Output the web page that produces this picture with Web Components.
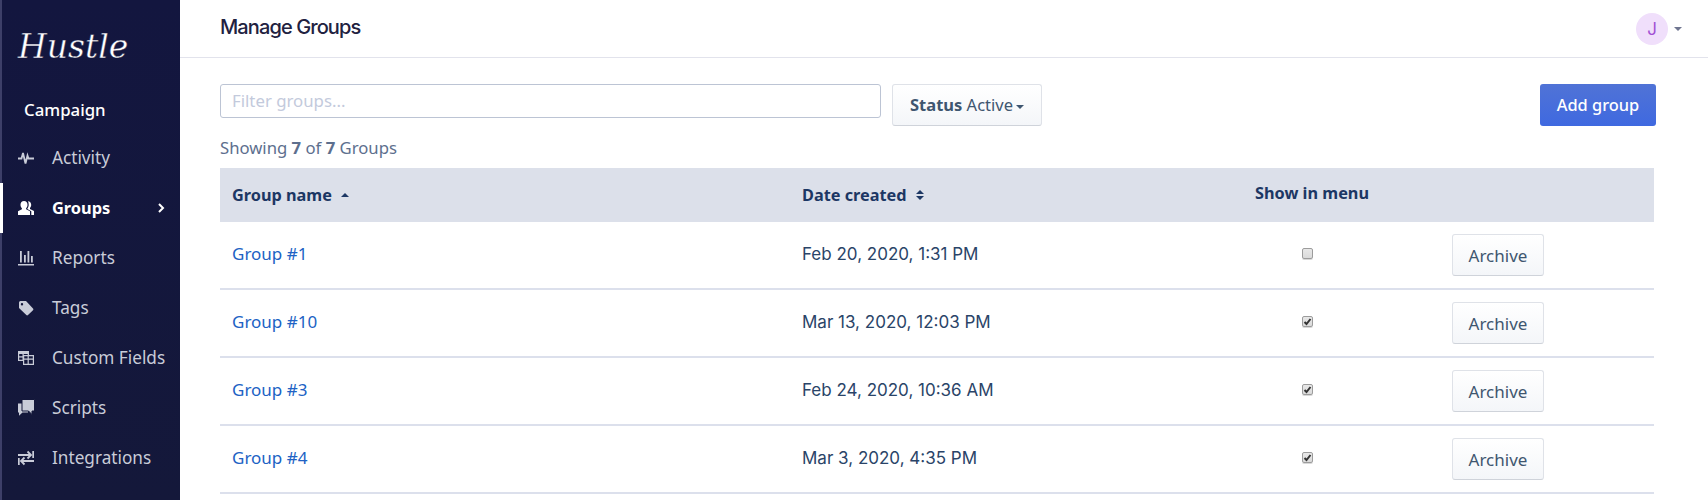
<!DOCTYPE html>
<html><head><meta charset="utf-8"><title>Manage Groups</title>
<style>
html,body{margin:0;padding:0;height:500px;overflow:hidden;background:#fff}
body{font-family:"Noto Sans","Liberation Sans",sans-serif}
app-shell{height:500px}
</style></head><body>
<template id="t-shell"><style>
:host{display:flex;width:1708px;overflow:hidden}
.main{flex:1;min-width:0;display:flex;flex-direction:column}
.content{padding:26px 52px 0 40px;display:flex;flex-direction:column}
</style><slot name="side"></slot><div class="main"><slot name="top"></slot><div class="content"><slot></slot></div></div></template>

<template id="t-side"><style>
:host{display:flex;flex-direction:column;width:180px;height:500px;flex:none;box-sizing:border-box;border-left:2px solid #3d3f68;background:linear-gradient(#13163f,#14183a)}
.logo{font:italic 400 33px/40px "DejaVu Serif",serif;color:#fff;padding:27px 0 0 16px;height:43px;-webkit-text-stroke:.4px #13163f}
.camp{font:500 16.8px/20px "Noto Sans",sans-serif;color:#fff;padding:30px 0 0 22px;height:33px}
</style><div class="logo">Hustle</div><div class="camp">Campaign</div><slot></slot></template>

<template id="t-nav"><style>
:host{display:flex;align-items:center;height:50px;margin-left:-2px;padding-left:18px;color:#c9ccd8;font:400 17.2px/20px "Noto Sans",sans-serif;box-sizing:border-box;width:180px}
:host([active]){color:#fff;font-weight:700;font-size:16.4px;background:linear-gradient(#fff,#fff) left/3px 100% no-repeat}
.i{width:16px;height:16px;margin-right:18px;flex:none;display:flex}
.t{flex:1;white-space:nowrap}
.c{width:8px;height:12px;margin-right:15px;fill:none;stroke:#fff;stroke-width:2}
</style><span class="i"><slot name="icon"></slot></span><span class="t"><slot></slot></span><svg class="c" viewBox="0 0 8 12" id="c"><path d="M2 2l4 4-4 4"/></svg></template>

<template id="t-top"><style>
:host{display:flex;align-items:center;height:57px;border-bottom:1px solid #e2e3ec;padding:0 26px 0 40px;background:#fff}
h1{flex:1;margin:0;font:500 20px/24px "Inter",sans-serif;color:#21213f;letter-spacing:-.9px;padding-bottom:3px}
.av{width:32px;height:32px;border-radius:50%;background:#f0dffb;color:#a24fd4;display:flex;align-items:center;justify-content:center;font:400 17px/20px "Inter",sans-serif}
.car{width:0;height:0;border:4px solid transparent;border-top-color:#6f7590;border-bottom:0;margin-left:6px}
</style><h1><slot></slot></h1><div class="av">J</div><div class="car"></div></template>

<template id="t-filter"><style>
:host{display:flex;align-items:flex-start;height:42px}
.input{box-sizing:border-box;width:661px;height:34px;border:1px solid #bcc4d4;border-radius:3px;padding:0 11px;font:400 16.8px/32px "Noto Sans",sans-serif;color:#c3cadc;background:#fff}
.sp{flex:1}
.status{margin-left:11px;width:150px;font-size:16.5px}
.status i{display:inline-block;width:0;height:0;border:4px solid transparent;border-top-color:#3f5670;border-bottom:0;margin-left:3px;vertical-align:middle}
.add{box-sizing:border-box;width:116px;height:42px;border-radius:3px;background:linear-gradient(#5073d6,#3f69e0);color:#fff;font:500 16.4px/41px "Noto Sans",sans-serif;text-align:center}
</style><div class="input">Filter groups...</div><gh-btn class="status"><b>Status</b> Active<i></i></gh-btn><span class="sp"></span><div class="add">Add group</div></template>

<template id="t-btn"><style>
:host{display:inline-flex;align-items:center;justify-content:center;box-sizing:border-box;height:42px;border:1px solid #dfe2e8;border-bottom-color:#cfd3da;border-radius:3px;background:linear-gradient(#fff,#f4f6f9);color:#3f5670;font:400 17px/20px "Noto Sans",sans-serif;white-space:pre}
</style><span><slot></slot></span></template>

<template id="t-count"><style>
:host{display:block;height:42px;font:400 16.7px/20px "Noto Sans",sans-serif;color:#5d6f8e;box-sizing:border-box;padding-top:12px}
</style><slot></slot></template>

<template id="t-table"><style>
:host{display:block;width:1434px}
.h{display:grid;grid-template-columns:570px 450px 1fr;height:54px;background:#dce0ea;color:#1c3764;font:700 16.3px/20px "Noto Sans",sans-serif}
.h>div{display:flex;align-items:center;padding-left:12px}
.h>div:nth-child(3){padding-left:15px;padding-bottom:5px}
svg{margin-left:9px;fill:#1c3764}
</style><div class="h"><div>Group name<svg width="8" height="12" viewBox="0 0 8 12"><path d="M0 8l4-4 4 4z"/></svg></div><div>Date created<svg width="8" height="12" viewBox="0 0 8 12"><path d="M0 5l4-4 4 4zM0 7l4 4 4-4z"/></svg></div><div>Show in menu</div></div><slot></slot></template>

<template id="t-row"><style>
:host{display:grid;grid-template-columns:570px 450px 200px 1fr;height:68px;box-sizing:border-box;border-bottom:2px solid #dce0ec;align-items:center}
.n{padding:0 0 3px 12px;color:#2062c4;font:400 17px/20px "Noto Sans",sans-serif}
.d{padding:0 0 3px 12px;color:#2a4468;font:400 17px/20px "Inter",sans-serif}
.c{display:flex;justify-content:center;margin-left:-66px}
.b{padding-left:12px}
.box{width:11px;height:11px;box-sizing:border-box;border:1px solid #9c9c9c;border-radius:2px;background:linear-gradient(#e8e8e8,#dadada);display:flex;margin-top:-3px;box-shadow:0 1px 0 #d8d8d8}
.box svg{display:none;width:9px;height:9px}
:host([on]) .box svg{display:block}
gh-btn{width:92px;padding-top:2px}
</style><div class="n"><slot name="name"></slot></div><div class="d"><slot name="date"></slot></div><div class="c"><span class="box"><svg viewBox="0 0 9 9"><path d="M1.500 5l2 2 4-5" fill="none" stroke="#333" stroke-width="2"/></svg></span></div><div class="b"><gh-btn>Archive</gh-btn></div></template>

<app-shell>
<side-bar slot="side">
<nav-item><svg slot="icon" viewBox="0 0 16 16" width="16" height="16" fill="none" stroke="currentColor" stroke-width="1.800"><path d="M0 8.500h3.500l1.500-5.500 2.500 10.500 2-8 1 3h5.500"/></svg>Activity</nav-item>
<nav-item active><svg slot="icon" viewBox="0 0 16 16" width="16" height="16" fill="currentColor" style="overflow:visible"><path d="M6 1c2.200 0 3.500 1.600 3.500 3.800 0 1.400-.5 2.700-1.400 3.500v1l3.900 2V15H0v-3.700l3.900-2v-1C3 7.500 2.500 6.200 2.500 4.800 2.500 2.600 3.800 1 6 1z"/><path d="M10 1.200c1.900.2 3.200 1.600 3.200 3.600 0 1.200-.5 2.500-1.200 3.300v.9l4 2V15h-2.700v-3.800l-3.900-2.100v-.6c.8-1 1.300-2.300 1.300-3.700 0-1.500-.3-2.600-.7-3.600z"/></svg>Groups</nav-item>
<nav-item><svg slot="icon" viewBox="0 0 16 16" width="16" height="16" fill="currentColor"><path d="M0 14h16v1.500H0zM2 1h1.800v11.500H2zM6 5h1.800v7.500H6zM9.500 1h1.800v11.500H9.500zM13 6h1.800v6.500H13z"/></svg>Reports</nav-item>
<nav-item><svg slot="icon" viewBox="0 0 16 16" width="16" height="16" fill="currentColor"><path fill-rule="evenodd" d="M1 2.500A1.500 1.500 0 0 1 2.500 1H8l7 7.500c.5.500.5 1.200 0 1.700L10 15c-.5.500-1.200.500-1.700 0L1 8zM4 3a1.200 1.200 0 1 0 0 2.400A1.200 1.200 0 0 0 4 3z"/></svg>Tags</nav-item>
<nav-item><svg slot="icon" viewBox="0 0 16 16" width="16" height="16" fill="currentColor"><path fill-rule="evenodd" d="M0 1h11v4h5v10H5v-4H0zM1.200 4v2.300h3.300V4zM5.700 4v1h4V4zM1.200 7.500v2.300h3.300V7.500zM6.200 6.300v2.300h3.400V6.300zM10.800 6.300v2.300h4V6.300zM6.200 9.800v4h3.400v-4zM10.800 9.800v4h4v-4z"/></svg>Custom Fields</nav-item>
<nav-item><svg slot="icon" viewBox="0 0 16 16" width="16" height="16" fill="currentColor" style="overflow:visible"><path d="M0 3.500h10v9H4.500L1 15.800v-3.300H0z"/><path d="M4 -.5h12.500v11.500h-2.500v3.500l-3.500-3.500H4z" stroke="#14183a" stroke-width="1"/></svg>Scripts</nav-item>
<nav-item><svg slot="icon" viewBox="0 0 16 16" width="16" height="16" fill="none" stroke="currentColor" stroke-width="1.800"><path d="M0 5h13M9.500 1.500L13 5 9.500 8.500M15.200 1v7M16 11H3M6.500 7.500L3 11l3.500 3.500M.8 8v7"/></svg>Integrations</nav-item>
</side-bar>
<top-bar slot="top">Manage Groups</top-bar>
<filter-bar></filter-bar>
<result-count>Showing <b>7</b> of <b>7</b> Groups</result-count>
<group-table>
<group-row><span slot="name">Group #1</span><span slot="date">Feb 20, 2020, 1:31 PM</span></group-row>
<group-row on><span slot="name">Group #10</span><span slot="date">Mar 13, 2020, 12:03 PM</span></group-row>
<group-row on><span slot="name">Group #3</span><span slot="date">Feb 24, 2020, 10:36 AM</span></group-row>
<group-row on><span slot="name">Group #4</span><span slot="date">Mar 3, 2020, 4:35 PM</span></group-row>
</group-table>
</app-shell>
<script>
const reg=(n,t,fn)=>customElements.define(n,class extends HTMLElement{constructor(){super();const s=this.attachShadow({mode:'open'});s.appendChild(document.getElementById(t).content.cloneNode(true));}connectedCallback(){fn&&fn(this)}});
reg('gh-btn','t-btn');
reg('side-bar','t-side');
reg('nav-item','t-nav',e=>{if(!e.hasAttribute('active'))e.shadowRoot.getElementById('c').style.visibility='hidden'});
reg('top-bar','t-top');
reg('filter-bar','t-filter');
reg('result-count','t-count');
reg('group-table','t-table');
reg('group-row','t-row');
reg('app-shell','t-shell');
</script>
</body></html>
